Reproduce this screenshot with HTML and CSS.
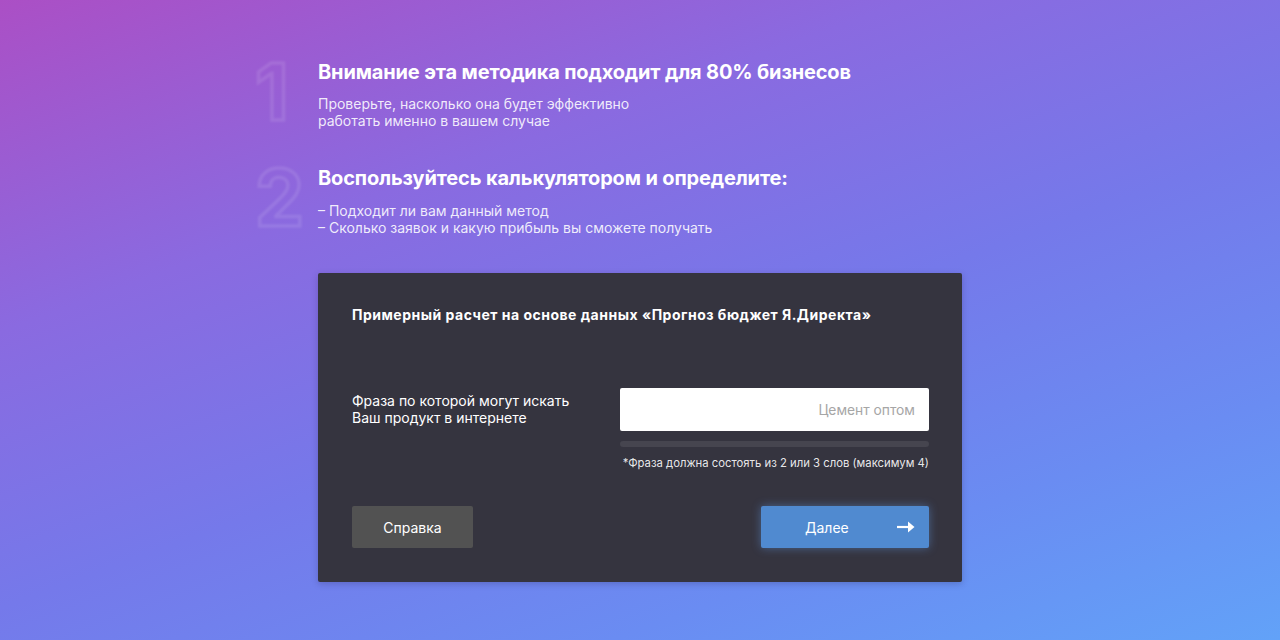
FILE: index.html
```html
<!DOCTYPE html>
<html lang="ru">
<head>
<meta charset="utf-8">
<link rel="stylesheet" href="styles.css">
</head>
<body>
<main class="page">
  <section class="step">
    <span class="step-num">1</span>
    <h2 class="step-title">Внимание эта методика подходит для 80% бизнесов</h2>
    <p class="step-text">Проверьте, насколько она будет эффективно<br>работать именно в вашем случае</p>
  </section>
  <section class="step step-second">
    <span class="step-num">2</span>
    <h2 class="step-title">Воспользуйтесь калькулятором и определите:</h2>
    <p class="step-text">– Подходит ли вам данный метод<br>– Сколько заявок и какую прибыль вы сможете получать</p>
  </section>
  <section class="card">
    <h3 class="card-title">Примерный расчет на основе данных «Прогноз бюджет Я.Директа»</h3>
    <div class="field">
      <label class="field-label" for="phrase">Фраза по которой могут искать<br>Ваш продукт в интернете</label>
      <div class="field-control">
        <input id="phrase" class="field-input" type="text" placeholder="Цемент оптом">
        <div class="field-bar"></div>
        <p class="field-note">*Фраза должна состоять из 2 или 3 слов (максимум 4)</p>
      </div>
    </div>
    <div class="actions">
      <button class="btn btn-help" type="button">Справка</button>
      <button class="btn btn-next" type="button"><span>Далее</span><svg class="arrow" width="18" height="12" viewBox="0 0 18 12"><path d="M0 6h14" stroke="#fff" stroke-width="2.2" fill="none"/><path d="M11 0.5l6.5 5.5-6.5 5.5z" fill="#fff"/></svg></button>
    </div>
  </section>
</main>
</body>
</html>
```
FILE: styles.css
```css
* { box-sizing: border-box; }
html, body { margin: 0; padding: 0; }
body {
  min-height: 640px;
  font-family: "Inter", "Noto Sans", sans-serif;
  color: #fff;
  background: linear-gradient(160deg, #ab4fc5 0%, #8a6ae0 30%, #7579ea 55%, #6a8cf2 78%, #62a2f8 100%);
  overflow: hidden;
}
.page {
  width: 644px;
  margin: 0 auto;
  padding-top: 59px;
}
.step { position: relative; }
.step-num {
  position: absolute;
  left: -63px;
  top: -7px;
  font-family: "Inter", sans-serif;
  font-weight: 700;
  font-size: 78px;
  line-height: 80px;
  color: transparent;
  -webkit-text-stroke: 3.5px rgba(255,255,255,0.11);
  filter: blur(1.2px);
}
.step-title {
  margin: 0;
  font-size: 20px;
  line-height: 26px;
  font-weight: 700;
  letter-spacing: -0.15px;
}
.step-text {
  margin: 10px 0 0;
  font-size: 14px;
  line-height: 17px;
  color: rgba(255,255,255,0.88);
}
.step-second { margin-top: 36px; }
.step-second .step-text { margin-top: 11px; }
.card {
  margin-top: 37px;
  background: #35343f;
  border-radius: 2px;
  box-shadow: 0 2px 6px rgba(40,30,80,0.25);
  padding: 32px 33px 34px 34px;
}
.card-title {
  margin: 0;
  font-size: 14px;
  line-height: 20px;
  font-weight: 700;
  letter-spacing: 0.5px;
}
.field {
  display: flex;
  justify-content: space-between;
  margin-top: 63px;
}
.field-label {
  font-size: 14px;
  line-height: 17px;
  padding-top: 4px;
}
.field-control { width: 309px; }
.field-input {
  display: block;
  width: 100%;
  height: 43px;
  border: none;
  border-radius: 2px;
  background: #fff;
  padding: 0 14px;
  text-align: right;
  font-family: inherit;
  font-size: 13.8px;
  outline: none;
}
.field-input::placeholder { color: #a6a6a6; }
.field-bar {
  margin-top: 10px;
  height: 6px;
  border-radius: 3px;
  background: #46454f;
}
.field-note {
  margin: 8px 0 0;
  text-align: right;
  font-size: 11.3px;
  line-height: 16px;
  color: rgba(255,255,255,0.9);
}
.actions {
  display: flex;
  justify-content: space-between;
  margin-top: 35px;
}
.btn {
  height: 42px;
  border: none;
  border-radius: 2px;
  color: #fff;
  font-family: inherit;
  font-size: 14px;
  cursor: pointer;
}
.btn-help {
  width: 121px;
  background: #525252;
}
.btn-next {
  width: 168px;
  background: #508ad0;
  box-shadow: 0 0 10px rgba(100,160,240,0.45);
  display: flex;
  align-items: center;
  padding: 0 14px 0 44px;
  justify-content: space-between;
}
.arrow { display: block; }
```
